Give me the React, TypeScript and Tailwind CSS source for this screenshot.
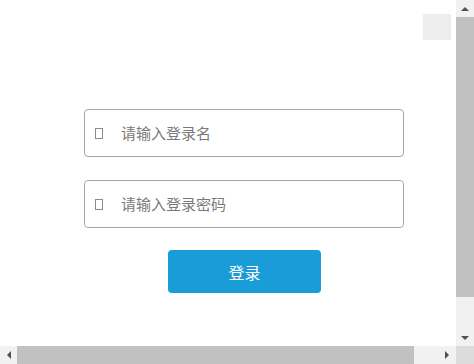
import React from 'react';

const font = { fontFamily: '"Noto Sans CJK SC", "Noto Sans", sans-serif' };

const Field = ({ placeholder, type = 'text' }: { placeholder: string; type?: string }) => (
  <div className="flex items-center h-[48px] w-[320px] border border-[#a6a6a6] rounded-[4px] bg-white">
    <span className="ml-[10px] w-[8px] h-[11px] border border-[#8a8a8a]" />
    <input
      type={type}
      placeholder={placeholder}
      className="ml-[18px] flex-1 bg-transparent outline-none text-[15px] text-[#333] placeholder:text-[#7a7a7a]"
      style={font}
    />
  </div>
);

const Arrow = ({ dir }: { dir: 'up' | 'down' | 'left' | 'right' }) => {
  const pts = {
    up: '4,0 8,4 0,4',
    down: '0,0 8,0 4,4',
    left: '4,0 4,8 0,4',
    right: '0,0 4,4 0,8',
  }[dir];
  const vertical = dir === 'up' || dir === 'down';
  return (
    <svg width={vertical ? 8 : 4} height={vertical ? 4 : 8} viewBox={vertical ? '0 0 8 4' : '0 0 4 8'}>
      <polygon points={pts} fill="#505050" />
    </svg>
  );
};

export default function App() {
  return (
    <div className="w-[474px] h-[364px] flex flex-col bg-white overflow-hidden" style={font}>
      <div className="flex flex-1 min-h-0">
        <main className="flex-1 flex flex-col">
          <div className="flex justify-end pt-[14px] pr-[5px]">
            <div className="w-[28px] h-[26px] bg-[#ededed]" />
          </div>
          <div className="ml-[84px] mt-[69px] flex flex-col">
            <Field placeholder="请输入登录名" />
            <div className="mt-[23px]">
              <Field placeholder="请输入登录密码" type="password" />
            </div>
            <button
              className="mt-[22px] ml-[84px] w-[153px] h-[43px] rounded-[4px] bg-[#1a9cd8] text-white text-[16px]"
              style={font}
            >
              登录
            </button>
          </div>
        </main>
        <div className="w-[18px] flex flex-col bg-[#f1f1f1]">
          <div className="h-[17px] flex items-center justify-center">
            <Arrow dir="up" />
          </div>
          <div className="h-[280px] bg-[#c1c1c1]" />
          <div className="flex-1" />
          <div className="h-[17px] flex items-center justify-center">
            <Arrow dir="down" />
          </div>
        </div>
      </div>
      <div className="h-[18px] flex bg-[#f1f1f1]">
        <div className="w-[17px] flex items-center justify-center">
          <Arrow dir="left" />
        </div>
        <div className="w-[397px] bg-[#c1c1c1]" />
        <div className="flex-1" />
        <div className="w-[18px] flex items-center justify-center">
          <Arrow dir="right" />
        </div>
        <div className="w-[18px] bg-[#dcdcdc]" />
      </div>
    </div>
  );
}
